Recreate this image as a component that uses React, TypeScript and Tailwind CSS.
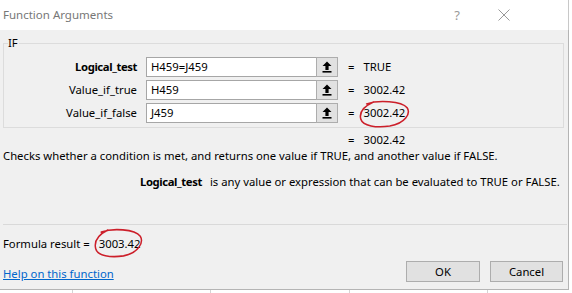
import React from "react";

type Arg = { label: string; value: string; result: string; bold?: boolean; circled?: boolean };

const args: Arg[] = [
  { label: "Logical_test", value: "H459=J459", result: "TRUE", bold: true },
  { label: "Value_if_true", value: "H459", result: "3002.42" },
  { label: "Value_if_false", value: "J459", result: "3002.42", circled: true },
];

function RedLoop({ className }: { className: string }) {
  return (
    <svg className={className} viewBox="0 0 56 30" fill="none" preserveAspectRatio="none">
      <path
        d="M10 4 C22 0 46 1 52 8 C56 14 50 24 34 27 C20 29 6 27 4 20 C2 13 6 7 17 2"
        stroke="#cc1f2a"
        strokeWidth="1.6"
        strokeLinecap="round"
      />
    </svg>
  );
}

function RefButton() {
  return (
    <div className="w-[22px] h-[20px] shrink-0 bg-[#e1e1e1] border border-[#adadad] flex items-center justify-center">
      <svg width="10" height="12" viewBox="0 0 10 12">
        <path d="M5 0.5 L9.5 5 H6.6 V9 H3.4 V5 H0.5 Z" fill="#000" />
        <rect x="0.5" y="10" width="9" height="1.6" fill="#000" />
      </svg>
    </div>
  );
}

function ArgRow({ arg }: { arg: Arg }) {
  return (
    <div className="flex items-center h-[20px]">
      <div className={`w-[133px] text-right ${arg.bold ? "font-bold tracking-[-0.4px]" : ""}`}>{arg.label}</div>
      <div className="ml-[9px] w-[170px] h-[20px] bg-white border border-[#a6a6a6] border-r-0 pl-[4px] flex items-center">
        {arg.value}
      </div>
      <RefButton />
      <span className="ml-[10px]">=</span>
      <span className="ml-[9px] relative">
        {arg.result}
        {arg.circled && <RedLoop className="absolute left-[-6px] top-[-5px] w-[54px] h-[29px]" />}
      </span>
    </div>
  );
}

export default function App() {
  return (
    <div className="w-[572px] h-[293px] bg-white overflow-hidden text-[11.3px] leading-[16px] text-[#000] whitespace-nowrap font-['Segoe_UI','Noto_Sans',sans-serif]">
      <div className="h-[30px] flex items-center pl-[3px] border-r border-[#c8c8c8] w-[569px]">
        <span className="text-[11.5px] text-[#777]">Function Arguments</span>
        <span className="ml-auto text-[13px] text-[#999]">?</span>
        <svg className="ml-[38px] mr-[58px]" width="12" height="12" viewBox="0 0 12 12">
          <path d="M0.5 0.5 L11.5 11.5 M11.5 0.5 L0.5 11.5" stroke="#999" strokeWidth="1" />
        </svg>
      </div>

      <div className="w-[569px] h-[260px] bg-[#f0f0f0] border-r border-b border-[#b4b4b4] pl-[3px] flex flex-col">
        <div className="relative mt-[13px] w-[561px] h-[85px] border border-[#dcdcdc] pt-[13px] flex flex-col gap-[3px]">
          <span className="absolute left-[4px] top-[-9px] bg-[#f0f0f0] pr-[1px]">IF</span>
          {args.map((a) => (
            <ArgRow key={a.label} arg={a} />
          ))}
        </div>

        <div className="mt-[4px] h-[16px] pl-[345px] flex">
          <span>=</span>
          <span className="ml-[9px]">3002.42</span>
        </div>
        <div className="h-[16px]">
          Checks whether a condition is met, and returns one value if TRUE, and another value if FALSE.
        </div>
        <div className="mt-[10px] h-[16px] pl-[137px] flex">
          <span className="font-bold tracking-[-0.4px]">Logical_test</span>
          <span className="ml-[8px]">is any value or expression that can be evaluated to TRUE or FALSE.</span>
        </div>

        <div className="mt-[34px] w-[564px] border-t border-[#d9d9d9]" />

        <div className="mt-[11px] h-[16px] flex">
          <span>Formula result =</span>
          <span className="ml-[9px] relative">
            3003.42
            <RedLoop className="absolute left-[-7px] top-[-8px] w-[52px] h-[31px]" />
          </span>
        </div>

        <div className="mt-[9px] flex items-center pr-[5px]">
          <a className="text-[#0066cc] underline mt-[4px]">Help on this function</a>
          <button className="ml-auto w-[74px] h-[21px] bg-[#e1e1e1] border border-[#adadad]">OK</button>
          <button className="ml-[10px] w-[73px] h-[21px] bg-[#e1e1e1] border border-[#adadad]">Cancel</button>
        </div>
      </div>

      <div className="h-[3px] flex">
        <div className="w-[73px] border-r border-[#d4d4d4]" />
        <div className="w-[138px] border-r border-[#d4d4d4]" />
        <div className="w-[139px] border-r border-[#d4d4d4]" />
        <div className="w-[138px] border-r border-[#d4d4d4]" />
      </div>
    </div>
  );
}
